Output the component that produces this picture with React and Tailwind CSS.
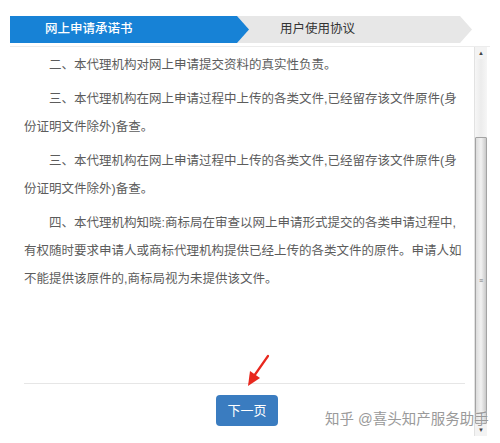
// 网上申请承诺书 page: step tabs, scrolling terms text, next-page button
const paragraphs = [
  '二、本代理机构对网上申请提交资料的真实性负责。',
  '三、本代理机构在网上申请过程中上传的各类文件,已经留存该文件原件(身份证明文件除外)备查。',
  '三、本代理机构在网上申请过程中上传的各类文件,已经留存该文件原件(身份证明文件除外)备查。',
  '四、本代理机构知晓:商标局在审查以网上申请形式提交的各类申请过程中,有权随时要求申请人或商标代理机构提供已经上传的各类文件的原件。申请人如不能提供该原件的,商标局视为未提供该文件。',
];

function StepTabs() {
  return (
    <div className="flex h-[27px] px-[10px] pt-0">
      <div className="relative z-10 flex w-[239px] items-center bg-[#1782d6] pl-[35px] text-[12.5px] font-medium text-white [clip-path:polygon(0_0,calc(100%-12px)_0,100%_50%,calc(100%-12px)_100%,0_100%)]">
        网上申请承诺书
      </div>
      <div className="ml-[-12px] flex w-[235px] items-center bg-[#e7e7e7] pl-[43px] text-[12.5px] text-[#333] [clip-path:polygon(0_0,calc(100%-12px)_0,100%_50%,calc(100%-12px)_100%,0_100%)]">
        用户使用协议
      </div>
    </div>
  );
}

function Scrollbar() {
  return (
    <div className="flex w-[13px] flex-col border-l border-[#e2e2e2] bg-[#f3f3f3]">
      <div className="flex h-[12px] items-center justify-center text-[6px] leading-none text-[#444]">▲</div>
      <div className="h-[78px] bg-gradient-to-r from-[#f6f6f6] via-[#ececec] to-[#f6f6f6]" />
      <div className="flex flex-1 items-center justify-center rounded-[1px] border border-[#a3a3a3] bg-gradient-to-r from-[#dcdcdc] via-[#f2f2f2] to-[#c9c9c9]">
        <span className="text-[7px] leading-none text-[#777]">≡</span>
      </div>
      <div className="flex h-[12px] items-center justify-center text-[6px] leading-none text-[#444]">▼</div>
    </div>
  );
}

export default function App() {
  return (
    <div className="relative h-[443px] w-[500px] overflow-hidden bg-white font-['Liberation_Sans','Noto_Sans_CJK_SC',sans-serif]">
      <div className="pt-[16px]">
        <StepTabs />
      </div>
      <div className="mx-[10px] mt-[3px] h-px bg-[#ececec]" />

      <div className="flex h-[392px]">
        <div className="flex w-[464px] flex-col pl-[24px]">
          <div className="w-[440px] pt-[4px] text-[12.5px] leading-[28px] text-[#5c5c5c]">
            {paragraphs.map((text, i) => (
              <p key={i} className="mb-[6px] indent-[2em]">
                {text}
              </p>
            ))}
          </div>

          <div className="mt-auto mr-[-1px] h-px bg-[#e6e6e6]" />
          <div className="flex justify-center pt-[11px] pb-[13px] pl-[6px]">
            <button className="h-[31px] w-[62px] rounded-[4px] bg-[#3a7cc0] text-[13px] text-white">
              下一页
            </button>
          </div>
        </div>
        <div className="ml-[10px] flex pb-[3px]">
          <Scrollbar />
        </div>
      </div>

      {/* red pointer at the button */}
      <svg className="absolute left-[240px] top-[352px]" width="36" height="40" viewBox="0 0 36 40">
        <line x1="28" y1="4" x2="14" y2="24" stroke="#e8281e" strokeWidth="2.2" strokeLinecap="round" />
        <polygon points="8,34 10,19 20,26" fill="#e8281e" />
      </svg>

      {/* watermark */}
      <div className="absolute left-[325px] top-[409px] text-[14.5px] leading-[20px] text-[#9a9a9a] [text-shadow:0_0_2px_#fff]">
        知乎 @喜头知产服务助手
      </div>
    </div>
  );
}
